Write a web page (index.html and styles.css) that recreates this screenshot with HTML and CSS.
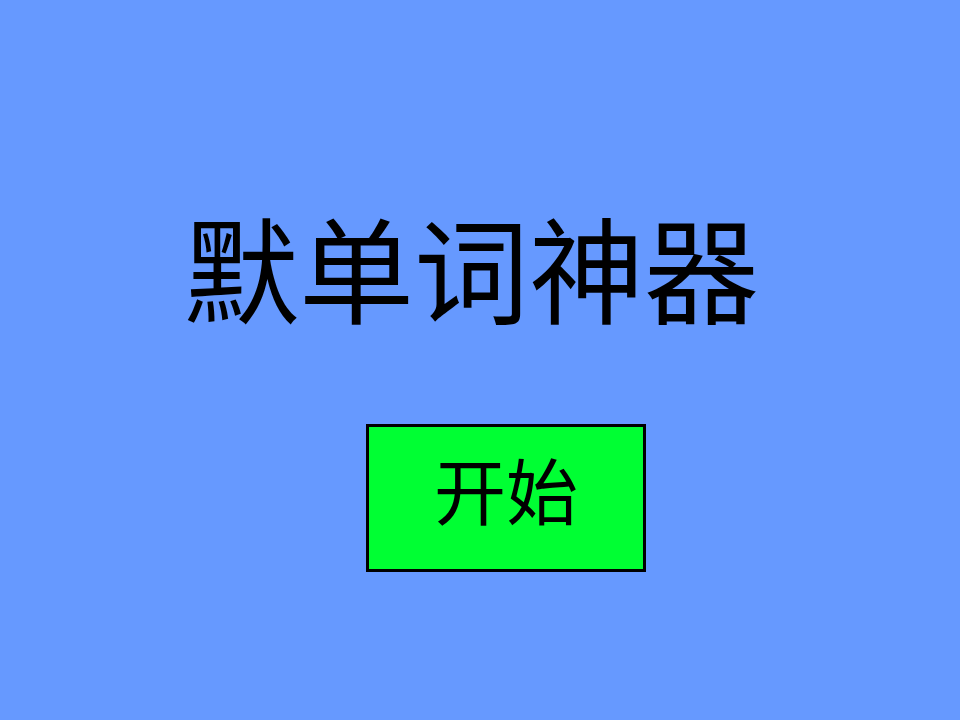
FILE: index.html
```html
<!DOCTYPE html>
<html lang="zh-CN">
<head>
<meta charset="utf-8">
<link rel="stylesheet" href="styles.css">
</head>
<body>
<main class="screen">
  <h1 class="title">默单词神器</h1>
  <button class="start">开始</button>
</main>
</body>
</html>
```
FILE: styles.css
```css
html, body {
  margin: 0;
  padding: 0;
  width: 960px;
  height: 720px;
  background: #6699ff;
  overflow: hidden;
}
.screen {
  display: flex;
  flex-direction: column;
  align-items: center;
  height: 720px;
  font-family: "Noto Sans CJK SC", "Noto Sans", sans-serif;
}
.title {
  margin: 195px 17px 0 0;
  font-size: 115px;
  font-weight: 400;
  line-height: 140px;
  color: #000;
}
.start {
  margin-top: 89px;
  margin-left: 52px;
  width: 280px;
  height: 148px;
  box-sizing: border-box;
  border: 3px solid #000;
  background: #00ff33;
  font-family: "Noto Sans CJK SC", "Noto Sans", sans-serif;
  font-size: 72px;
  color: #000;
  padding: 0 0 20px 0;
  line-height: 1;
}
```
